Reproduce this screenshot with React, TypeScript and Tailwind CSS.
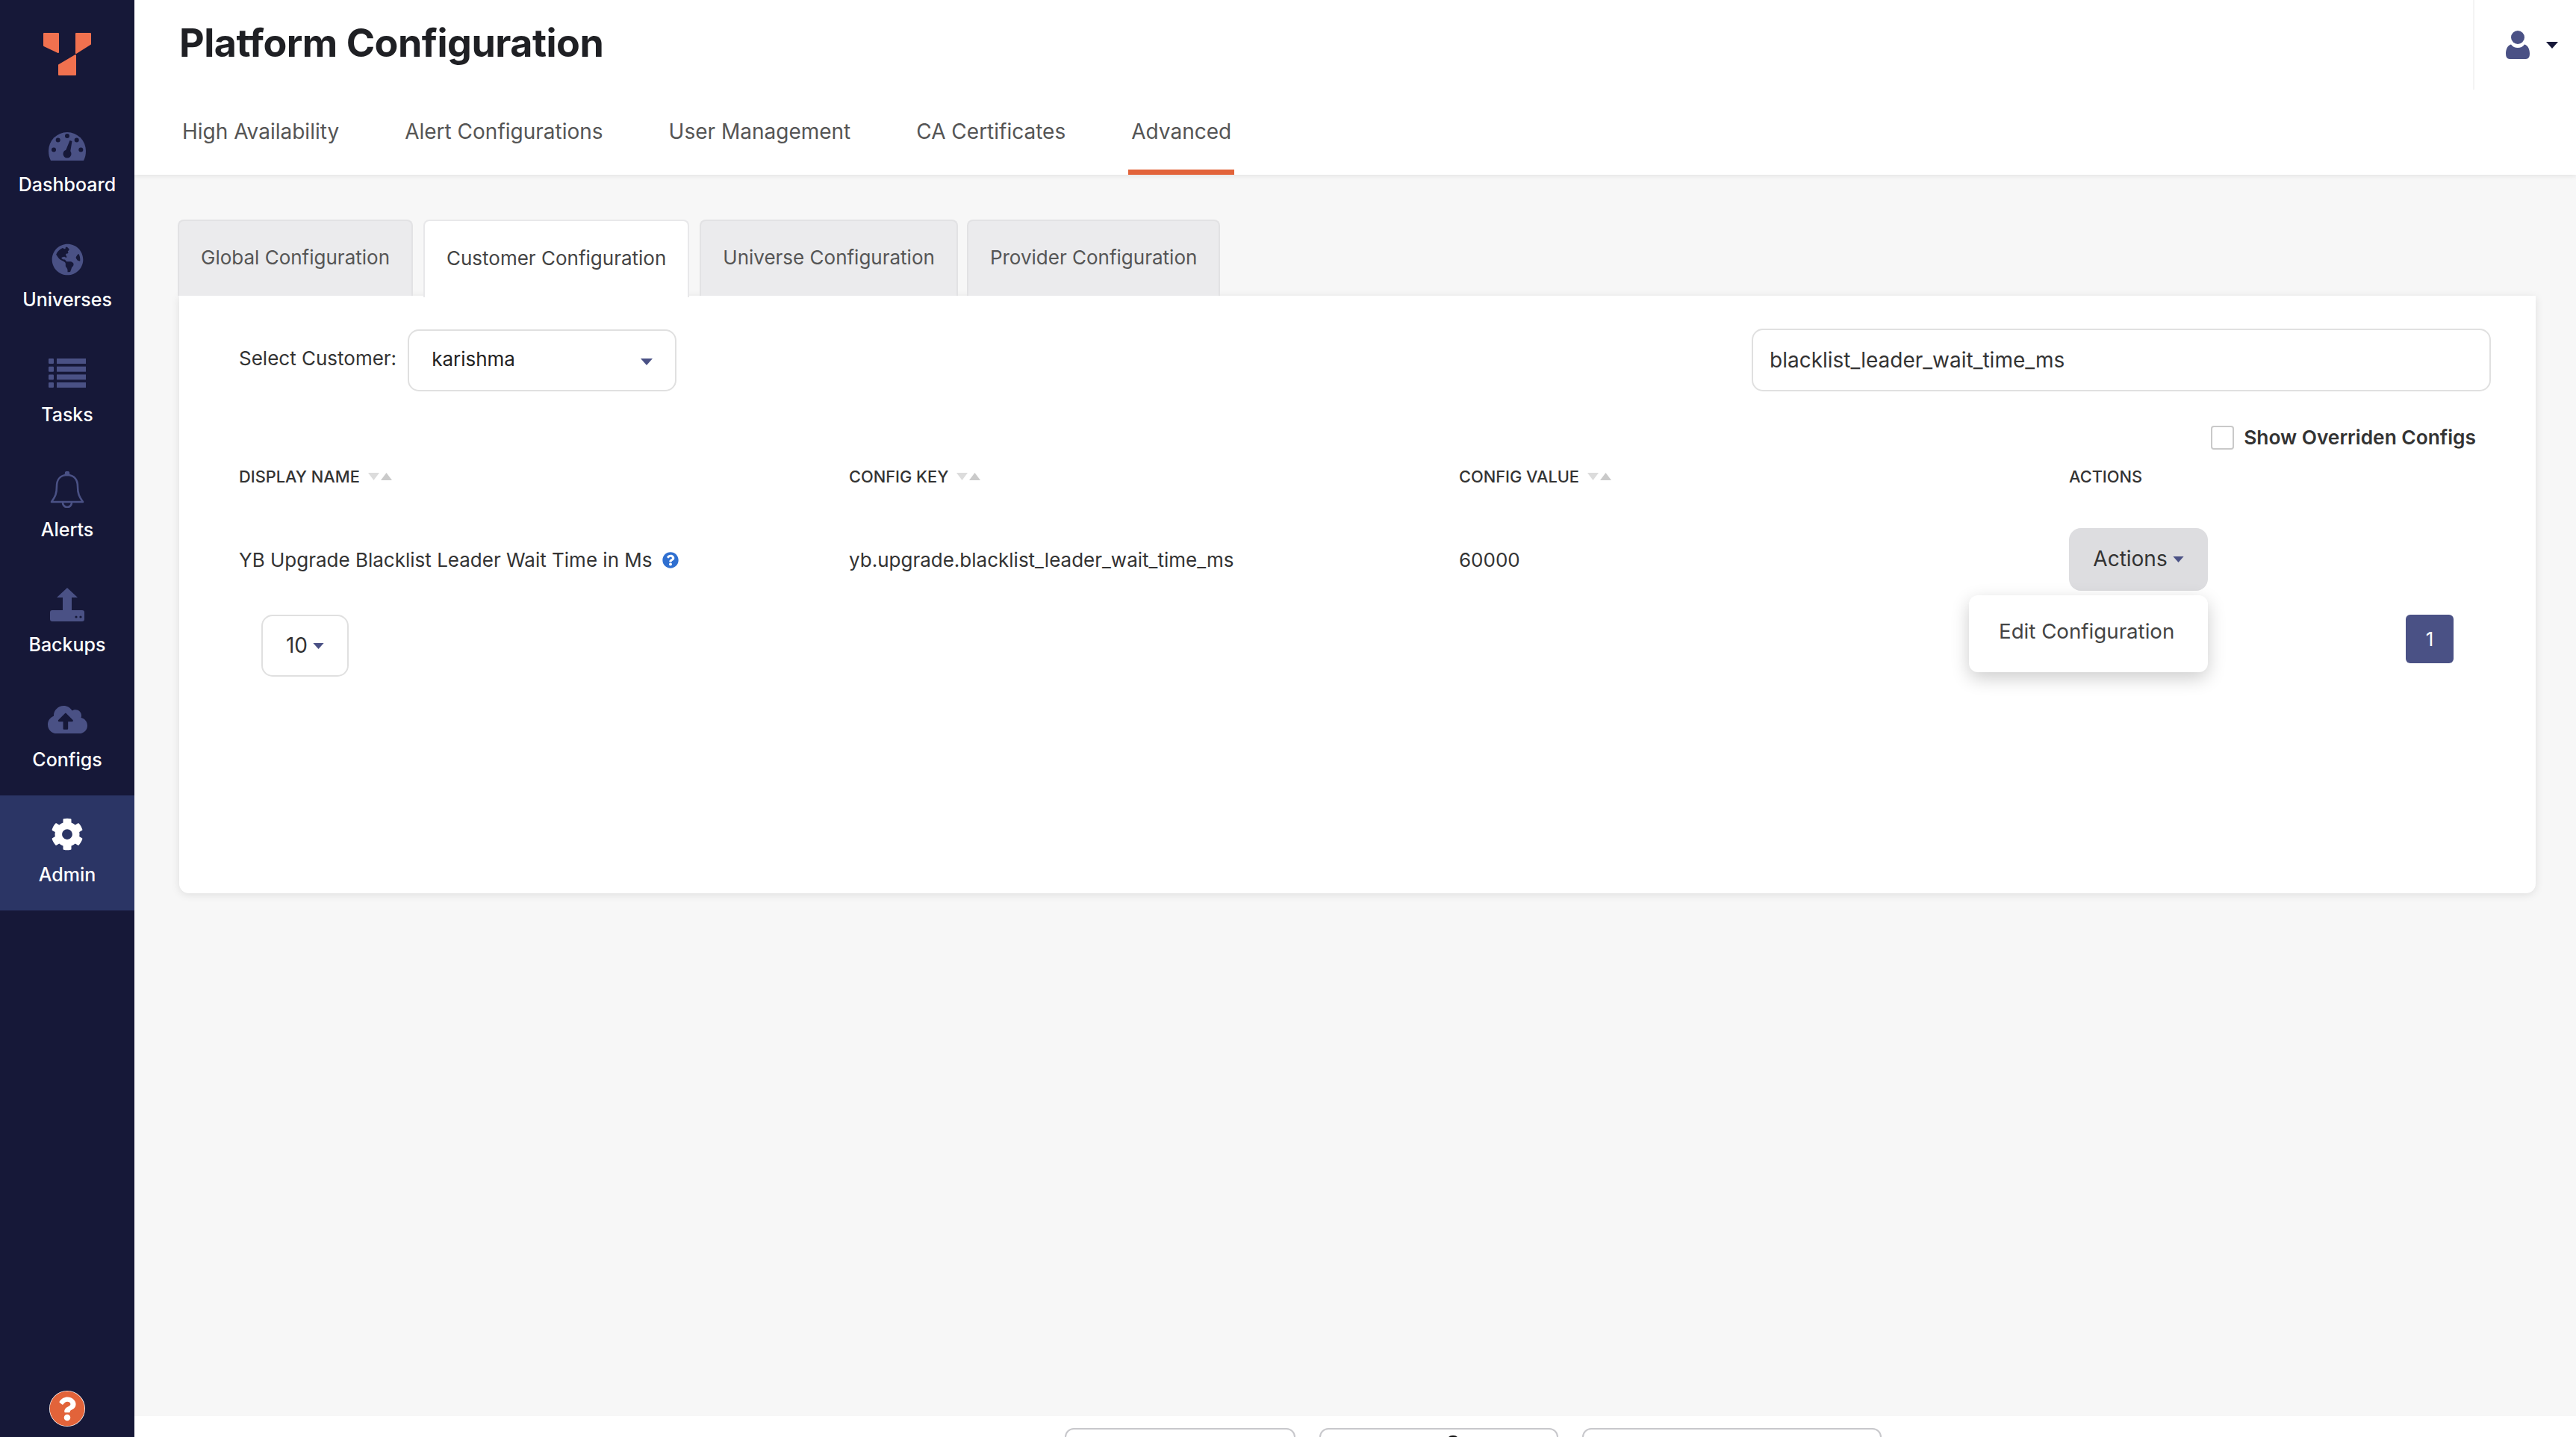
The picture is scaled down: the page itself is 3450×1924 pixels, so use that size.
import { ReactNode } from "react";
import { FaCloudUploadAlt, FaCog, FaGlobeAmericas, FaQuestionCircle } from "react-icons/fa";

const NAVY = "#161838";

function DashboardIcon() {
  return (
    <svg viewBox="0 0 50 39" className="mt-[4px] h-[39px] w-[50px]" fill="#4a5185">
      <path d="M3 39C1 35 0 31 0 26A25 25 0 0 1 50 26C50 31 49 35 47 39Z" />
      <g fill={NAVY}>
        <circle cx="25" cy="6" r="3" />
        <circle cx="12.7" cy="11.5" r="3" />
        <circle cx="37.7" cy="11.5" r="3" />
        <circle cx="7" cy="24.5" r="3" />
        <circle cx="43.3" cy="24.5" r="3" />
        <path d="M28.5 12L31.5 13L29 28L22 28Z" />
        <circle cx="25" cy="30" r="5.5" />
      </g>
    </svg>
  );
}

function TasksIcon() {
  return (
    <svg viewBox="0 0 50 39" className="-mt-[4px] h-[39px] w-[50px]" fill="#4a5185">
      {[0, 10.7, 21.4, 32].map((y) => (
        <g key={y}>
          <rect x="0" y={y} width="7" height="7" rx="1" />
          <rect x="11" y={y} width="39" height="7" />
        </g>
      ))}
    </svg>
  );
}

function BellIcon() {
  return (
    <svg viewBox="0 0 46 49" className="h-[49px] w-[46px]" fill="none" stroke="#4a5185" strokeWidth="2.6" strokeLinejoin="round">
      <circle cx="23" cy="3" r="2" fill="#4a5185" />
      <path d="M23 5C13 5 9 12 9 20C9 30 7 34 2 41H44C39 34 37 30 37 20C37 12 33 5 23 5Z" />
      <path d="M17 42A6 6 0 0 0 29 42" />
    </svg>
  );
}

function BackupIcon() {
  return (
    <svg viewBox="0 0 46 45" className="h-[45px] w-[46px]" fill="#4a5185">
      <path d="M23 0L37 13H29V31H17V13H9Z" />
      <rect x="0" y="30" width="46" height="15" rx="3" />
      <circle cx="35" cy="39" r="1.6" fill={NAVY} />
      <circle cx="41" cy="39" r="1.6" fill={NAVY} />
    </svg>
  );
}

function Logo() {
  return (
    <svg viewBox="0 0 64 57" className="h-[57px] w-[64px]" fill="#f0714f" stroke="#f0714f" strokeWidth="2" strokeLinejoin="round">
      <path d="M1 1H20V26L1 17Z" />
      <path d="M44 1H63V15L44 27Z" />
      <path d="M21 43L43 30V56H21Z" />
    </svg>
  );
}

function UserIcon() {
  return (
    <svg viewBox="0 0 32 38" className="h-[38px] w-[32px]" fill="#4a5185">
      <circle cx="16" cy="9" r="9" />
      <path d="M0 31C0 24 3 19.5 7 18.5C9 21.5 12.5 23 16 23C19.5 23 23 21.5 25 18.5C29 19.5 32 24 32 31Q32 38 27 38H5Q0 38 0 31Z" />
    </svg>
  );
}

function Caret({ className, color = "#4a5185" }: { className?: string; color?: string }) {
  return (
    <svg viewBox="0 0 16 9" className={className} fill={color}>
      <path d="M0 0H16L8 9Z" />
    </svg>
  );
}

function SortCarets() {
  return (
    <svg viewBox="0 0 32 10" className="ml-[11px] h-[10px] w-[32px]">
      <path d="M0 0H15L7.5 10Z" fill="#dcdcdc" />
      <path d="M17 10H32L24.5 0Z" fill="#cacaca" />
    </svg>
  );
}

function NavItem({ icon, label, active }: { icon: ReactNode; label: string; active?: boolean }) {
  return (
    <div className={`flex h-[154px] flex-col items-center pt-[26px] ${active ? "bg-[#2b3565]" : ""}`}>
      <div className="flex h-[52px] items-center justify-center">{icon}</div>
      <div className="mt-[10px] text-[25px] leading-[36px] font-medium text-white">{label}</div>
    </div>
  );
}

function HeadCell({ label, sortable = true }: { label: string; sortable?: boolean }) {
  return (
    <div className="flex h-[36px] items-center text-[21.8px] font-medium text-[#333]">
      {label}
      {sortable && <SortCarets />}
    </div>
  );
}

const pageTabs = ["High Availability", "Alert Configurations", "User Management", "CA Certificates", "Advanced"];
const configTabs = ["Global Configuration", "Customer Configuration", "Universe Configuration", "Provider Configuration"];

export default function App() {
  return (
    <div className="flex h-screen w-full overflow-hidden bg-white [font-family:Inter,sans-serif]">
      <aside className="flex h-full w-[180px] shrink-0 flex-col bg-[#161838]">
        <div className="flex h-[141px] justify-center pt-[44px]">
          <Logo />
        </div>
        <NavItem icon={<DashboardIcon />} label="Dashboard" />
        <NavItem icon={<FaGlobeAmericas color="#4a5185" size={43} />} label="Universes" />
        <NavItem icon={<TasksIcon />} label="Tasks" />
        <NavItem icon={<BellIcon />} label="Alerts" />
        <NavItem icon={<BackupIcon />} label="Backups" />
        <NavItem icon={<FaCloudUploadAlt color="#4a5185" size={53} />} label="Configs" />
        <NavItem icon={<FaCog color="#ffffff" size={44} />} label="Admin" active />
        <div className="mt-auto flex justify-center pb-[14px]">
          <span className="flex h-[48px] w-[48px] items-center justify-center rounded-full bg-white">
            <FaQuestionCircle color="#e2633a" size={48} />
          </span>
        </div>
      </aside>

      <main className="flex min-w-0 flex-1 flex-col">
        <header className="relative z-10 bg-white shadow-[0_2px_6px_rgba(0,0,0,0.08)]">
          <div className="flex h-[120px]">
            <h1 className="flex-1 pt-[28px] pl-[60px] text-[52px] leading-[60px] font-bold tracking-[-0.5px] text-[#1f2024]">Platform Configuration</h1>
            <div className="flex w-[138px] items-start border-l-2 border-[#f4f4f4] pt-[41px] pl-[42px]">
              <UserIcon />
              <Caret className="mt-[15px] ml-[22px] h-[9px] w-[16px]" color={NAVY} />
            </div>
          </div>
          <nav className="flex pt-[34px] pl-[60px]">
            {pageTabs.map((tab) => (
              <div
                key={tab}
                className={`mr-[80px] border-b-[7px] px-[4px] pb-[29px] text-[28px] leading-[44px] text-[#555] ${tab === "Advanced" ? "border-[#e2633a]" : "border-transparent"}`}
              >
                {tab}
              </div>
            ))}
          </nav>
        </header>

        <section className="flex-1 bg-[#f7f7f7] pt-[60px] pr-[54px] pl-[60px]">
          <div className="-ml-[2px] flex gap-[14px]">
            {configTabs.map((tab) => (
              <div
                key={tab}
                className={`relative z-10 flex h-[102px] items-center rounded-t-[8px] border-2 border-b-0 px-[29px] pb-[4px] text-[26px] last:-ml-[2px] ${
                  tab === "Customer Configuration" ? "-mb-[2px] h-[104px] border-[#e8e8ea] bg-white text-[#444]" : "border-[#e2e2e4] bg-[#ebebed] text-[#555]"
                }`}
              >
                {tab}
              </div>
            ))}
          </div>

          <div className="h-[800px] rounded-b-[13px] bg-white shadow-[0_2px_12px_rgba(0,0,0,0.1)]">
            <div className="flex items-center justify-between pt-[44px] pr-[60px] pl-[80px]">
              <div className="flex items-center">
                <span className="mb-[5px] text-[26px] text-[#333]">Select Customer:</span>
                <div className="ml-[15px] flex h-[83px] w-[360px] items-center justify-between rounded-[15px] border-2 border-[#e0e0e0] pr-[30px] pl-[30px] text-[26px] text-[#222]">
                  <span className="mb-[3px]">karishma</span>
                  <Caret className="mt-[4px] h-[9px] w-[16px]" />
                </div>
              </div>
              <div className="flex h-[84px] w-[990px] items-center rounded-[15px] border-2 border-[#e0e0e0] pl-[22px] text-[28px] text-[#333]">
                blacklist_leader_wait_time_ms
              </div>
            </div>

            <div className="mt-[46px] flex h-[32px] items-center justify-end pr-[80px]">
              <span className="h-[32px] w-[31px] rounded-[4px] border-2 border-[#c9c9c9] bg-white" />
              <span className="ml-[13px] text-[26.3px] leading-[32px] font-semibold text-[#333]">Show Overriden Configs</span>
            </div>

            <div className="mt-[18px] grid grid-cols-[817px_817px_817px_1fr] items-center pl-[80px]">
              <HeadCell label="DISPLAY NAME" />
              <HeadCell label="CONFIG KEY" />
              <HeadCell label="CONFIG VALUE" />
              <HeadCell label="ACTIONS" sortable={false} />
            </div>

            <div className="mt-[51px] grid grid-cols-[817px_817px_817px_1fr] items-center pl-[80px] text-[26px] text-[#333]">
              <div className="flex items-center">
                YB Upgrade Blacklist Leader Wait Time in Ms
                <FaQuestionCircle className="mt-[2px] ml-[13px]" color="#2f6fd0" size={22} />
              </div>
              <div>yb.upgrade.blacklist_leader_wait_time_ms</div>
              <div>60000</div>
              <div className="relative w-[186px]">
                <button className="flex h-[84px] w-[186px] items-center justify-center rounded-[16px] bg-[#dddde0] pb-[2px] text-[28px] text-[#333]">
                  Actions
                  <Caret className="mt-[2px] ml-[7px] h-[8px] w-[15px]" />
                </button>
                <div className="absolute top-[90px] right-0 z-20 flex h-[103px] w-[320px] items-center rounded-[12px] bg-white pb-[6px] pl-[40px] text-[27.7px] text-[#444] shadow-[0_8px_24px_rgba(0,0,0,0.2)]">
                  Edit Configuration
                </div>
              </div>
            </div>

            <div className="mt-[32px] flex items-start justify-between pr-[110px] pl-[110px]">
              <div className="flex h-[83px] w-[117px] items-center justify-center rounded-[15px] border-2 border-[#e0e0e0] pb-[2px] text-[28px] text-[#333]">
                10
                <Caret className="mt-[2px] ml-[7px] h-[8px] w-[15px]" />
              </div>
              <div className="flex h-[65px] w-[64px] items-center justify-center rounded-[6px] bg-[#4a5185] text-[26px] text-white">1</div>
            </div>
          </div>
        </section>

        <footer className="flex h-[28px] gap-[32px] overflow-hidden bg-white pt-[16px] pl-[1246px]">
          <div className="h-[40px] w-[309px] rounded-t-[12px] border-2 border-[#c8c8cc]" />
          <div className="flex h-[40px] w-[320px] justify-center rounded-t-[12px] border-2 border-[#c8c8cc] pl-[38px]">
            <span className="mt-[8px] h-[14px] w-[16px] rounded-full bg-[#111]" />
          </div>
          <div className="h-[40px] w-[401px] rounded-t-[12px] border-2 border-[#c8c8cc]" />
        </footer>
      </main>
    </div>
  );
}
